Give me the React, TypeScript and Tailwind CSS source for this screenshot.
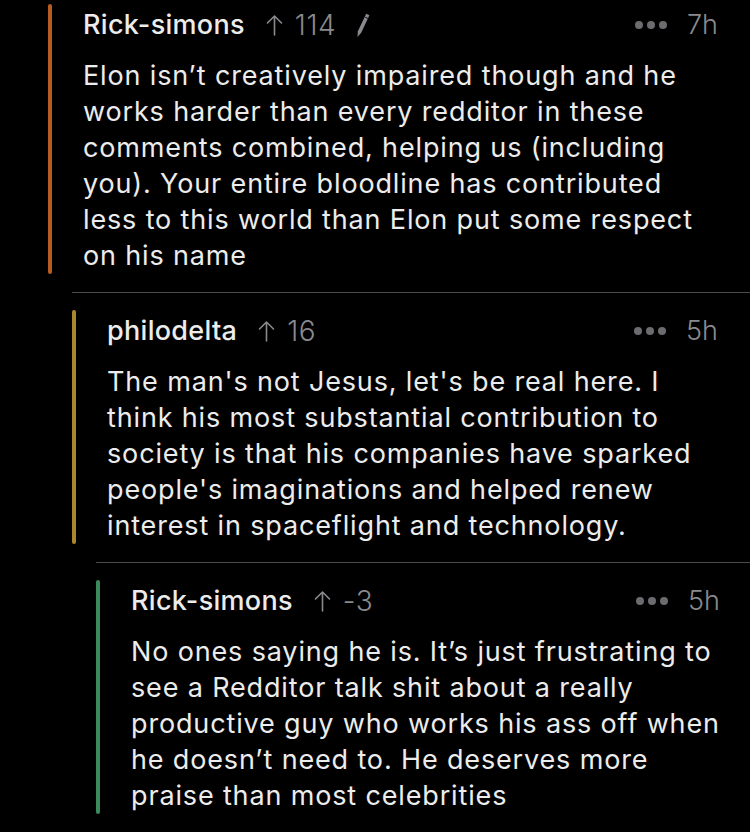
import React from "react";

type Comment = {
  user: string;
  score: string;
  edited?: boolean;
  time: string;
  bar: string;
  lines: string[];
  replies?: Comment[];
};

const thread: Comment = {
  user: "Rick-simons",
  score: "114",
  edited: true,
  time: "7h",
  bar: "bg-[#b65c1f]",
  lines: [
    "Elon isn’t creatively impaired though and he",
    "works harder than every redditor in these",
    "comments combined, helping us (including",
    "you). Your entire bloodline has contributed",
    "less to this world than Elon put some respect",
    "on his name",
  ],
  replies: [
    {
      user: "philodelta",
      score: "16",
      time: "5h",
      bar: "bg-[#a8872d]",
      lines: [
        "The man's not Jesus, let's be real here. I",
        "think his most substantial contribution to",
        "society is that his companies have sparked",
        "people's imaginations and helped renew",
        "interest in spaceflight and technology.",
      ],
      replies: [
        {
          user: "Rick-simons",
          score: "-3",
          time: "5h",
          bar: "bg-[#3b8a5b]",
          lines: [
            "No ones saying he is. It’s just frustrating to",
            "see a Redditor talk shit about a really",
            "productive guy who works his ass off when",
            "he doesn’t need to. He deserves more",
            "praise than most celebrities",
          ],
        },
      ],
    },
  ],
};

function UpArrow() {
  return (
    <svg width="17" height="22" viewBox="0 0 17 22" fill="none" className="shrink-0">
      <path d="M8.5 21V2M1.5 9L8.5 2l7 7" stroke="#8a8a8e" strokeWidth="1.6" strokeLinecap="round" strokeLinejoin="round" />
    </svg>
  );
}

function Pencil() {
  return (
    <svg width="14" height="25" viewBox="0 0 14 25" fill="none" className="shrink-0">
      <path d="M10.2 0.8L13.4 2.2L5.2 19.8L1.4 24L1.9 18.3Z" fill="#8a8a8e" />
      <path d="M9.2 4.2L12.4 5.6" stroke="#000" strokeWidth="0.9" />
    </svg>
  );
}

function CommentBlock({ c, top }: { c: Comment; top?: boolean }) {
  return (
    <div className={top ? "pt-[4px]" : "pt-[17px] border-t border-[#4a4a4e]"}>
      <div className="flex">
        <div className={`w-[4px] shrink-0 rounded-full ${c.bar}`} />
        <div className="flex-1 pl-[31px] pr-[32px]">
          <div className="h-[40px] pt-[2px] flex items-center">
            <span className="text-[27px] font-medium text-[#ececec] tracking-[0.3px]">{c.user}</span>
            <span className="ml-[21px] flex items-center gap-[12px] text-[28px] font-light text-[#8a8a8e] tracking-[0.6px]">
              <UpArrow />
              <span>{c.score}</span>
            </span>
            {c.edited && (
              <span className="ml-[20px]">
                <Pencil />
              </span>
            )}
            <div className="ml-auto flex items-center gap-[4px]">
              <span className="w-[8px] h-[8px] rounded-full bg-[#6c6c70]" />
              <span className="w-[8px] h-[8px] rounded-full bg-[#6c6c70]" />
              <span className="w-[8px] h-[8px] rounded-full bg-[#6c6c70]" />
            </div>
            <span className="ml-[20px] text-[27px] font-light text-[#8a8a8e]">{c.time}</span>
          </div>
          <div className="mt-[14px] text-[27px] leading-[36px] text-[#ececec] tracking-[0.85px]">
            {c.lines.map((l, i) => (
              <div key={i} className="whitespace-nowrap">
                {l}
              </div>
            ))}
          </div>
        </div>
      </div>
      <div className="pt-[18px]" />
      {c.replies && (
        <div className="ml-[24px]">
          {c.replies.map((r, i) => (
            <CommentBlock key={i} c={r} />
          ))}
        </div>
      )}
    </div>
  );
}

export default function App() {
  return (
    <div className="w-[750px] h-[832px] overflow-hidden bg-black font-['Inter','Liberation_Sans',sans-serif] antialiased">
      <div className="pl-[48px]">
        <CommentBlock c={thread} top />
      </div>
    </div>
  );
}
